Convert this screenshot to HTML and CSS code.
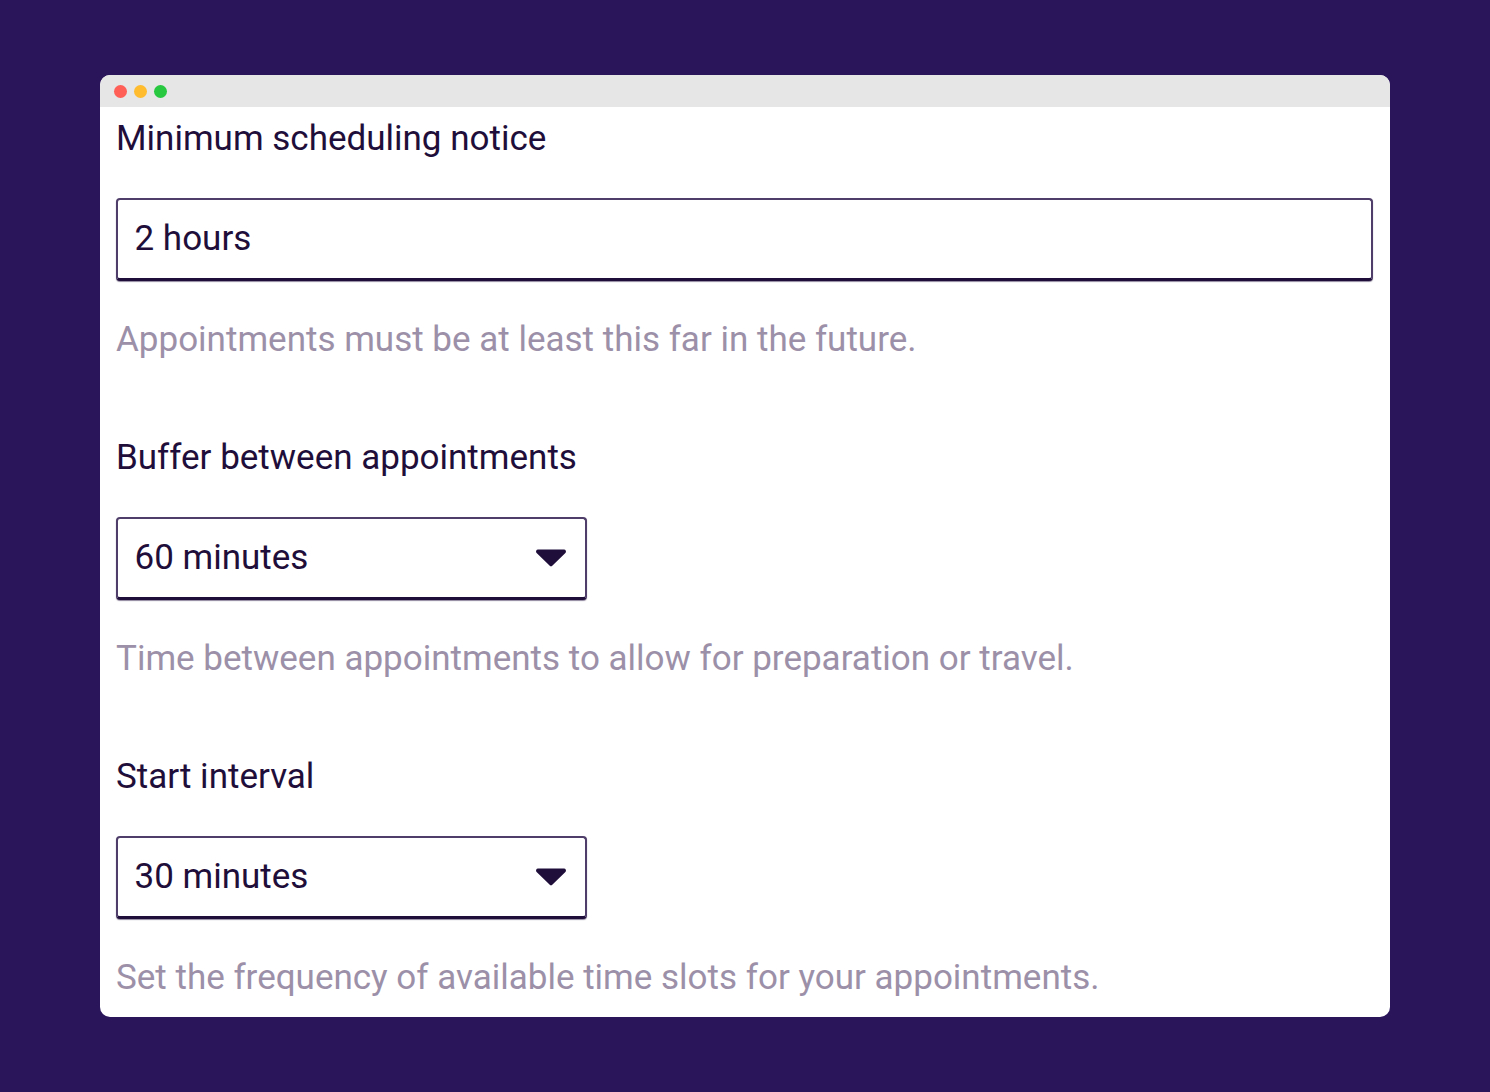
FILE: index.html

```html
<!DOCTYPE html>
<html lang="en">
<head>
    <meta charset="UTF-8">
    <title>Scheduling settings</title>
    <link rel="stylesheet" href="styles.css">
</head>
<body>
    <div class="window">
        <div class="titlebar">
            <span class="dot dot-red"></span>
            <span class="dot dot-yellow"></span>
            <span class="dot dot-green"></span>
        </div>
        <div class="content">
            <div class="field">
                <p class="label">Minimum scheduling notice</p>
                <div class="input">2 hours</div>
                <p class="hint">Appointments must be at least this far in the future.</p>
            </div>
            <div class="field">
                <p class="label">Buffer between appointments</p>
                <div class="input select">
                    60 minutes
                    <svg class="caret" width="34" height="20" viewBox="0 0 34 20"><path d="M4 1.500h26a2 2 0 0 1 1.400 3.400L18.500 17.500a2 2 0 0 1-3 0L2.600 4.900A2 2 0 0 1 4 1.500z"/></svg>
                </div>
                <p class="hint">Time between appointments to allow for preparation or travel.</p>
            </div>
            <div class="field">
                <p class="label">Start interval</p>
                <div class="input select">
                    30 minutes
                    <svg class="caret" width="34" height="20" viewBox="0 0 34 20"><path d="M4 1.500h26a2 2 0 0 1 1.400 3.400L18.500 17.500a2 2 0 0 1-3 0L2.600 4.900A2 2 0 0 1 4 1.500z"/></svg>
                </div>
                <p class="hint">Set the frequency of available time slots for your appointments.</p>
            </div>
        </div>
    </div>
</body>
</html>
```

FILE: styles.css

```css
:root {
    --bg-color: #2a145a;
    --ink-color: #1f0e3a;
    --hint-color: #9c90a9;
}

body {
    margin: 0;
    min-height: 1092px;
    background-color: var(--bg-color);
    font-family: 'Roboto', 'Liberation Sans', sans-serif;
    color: var(--ink-color);
}

/* Window */
.window {
    width: 1290px;
    height: 942px;
    margin: 0 auto;
    position: relative;
    top: 75px;
    background-color: #fff;
    border-radius: 10px;
    overflow: hidden;
}

.titlebar {
    box-sizing: border-box;
    height: 32px;
    padding: 1px 0 0 13.500px;
    background-color: #e6e6e6;
    display: flex;
    align-items: center;
    gap: 7px;
}

.dot {
    width: 13px;
    height: 13px;
    border-radius: 50%;
}

.dot-red { background-color: #ff5f57; }
.dot-yellow { background-color: #febc2e; }
.dot-green { background-color: #28c840; }

/* Form fields */
.content {
    padding: 12px 17px 0 16px;
}

.field {
    margin-bottom: 78px;
}

.label,
.hint {
    margin: 0;
    font-size: 35px;
    line-height: 40px;
}

.hint {
    margin-top: 39px;
    color: var(--hint-color);
}

.input {
    box-sizing: border-box;
    height: 83px;
    margin-top: 39px;
    padding: 0 17px 1px 16.500px;
    display: flex;
    align-items: center;
    justify-content: space-between;
    font-size: 35px;
    background-color: #fff;
    border: 2px solid #4f3e69;
    border-bottom: 3px solid var(--ink-color);
    border-radius: 4px;
    box-shadow: 0 1px 1px rgba(31, 14, 58, 0.5);
}

.select {
    width: 471px;
}

.caret {
    fill: var(--ink-color);
}
```
